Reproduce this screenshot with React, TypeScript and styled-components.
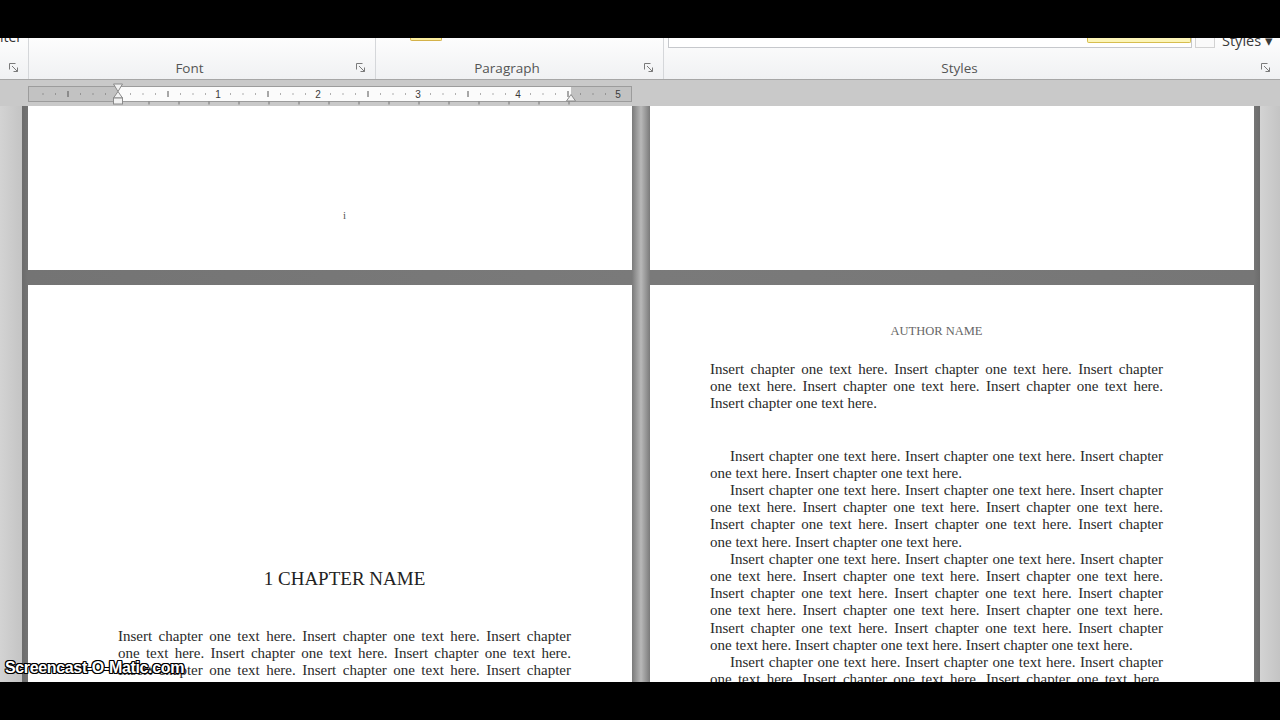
import React from "react";
import styled, { createGlobalStyle } from "styled-components";

const GlobalStyle = createGlobalStyle`
  html, body {
    margin: 0;
    padding: 0;
    background: #000;
  }
`;

const LINE_A = "Insert chapter one text here. Insert chapter one text here. Insert chapter";
const LINE_B = "one text here. Insert chapter one text here. Insert chapter one text here.";

type Para = { indent: boolean; lines: string[]; open?: boolean };

// right hand page, line breaks as in the document
const rightParas: Para[] = [
  { indent: false, lines: [LINE_A, LINE_B, "Insert chapter one text here."] },
  { indent: true, lines: [LINE_A, "one text here. Insert chapter one text here."] },
  { indent: true, lines: [LINE_A, LINE_B, LINE_A, "one text here. Insert chapter one text here."] },
  { indent: true, lines: [LINE_A, LINE_B, LINE_A, LINE_B, LINE_A, LINE_B] },
  { indent: true, lines: [LINE_A, LINE_B, LINE_A], open: true },
];

const leftPara: Para = { indent: false, lines: [LINE_A, LINE_B, LINE_A, LINE_B], open: true };

function Launcher() {
  return (
    <LauncherIcon viewBox="0 0 10 10">
      <path d="M0.5 6.5 V0.5 H6.5" />
      <path d="M3 3 L8.5 8.5" />
      <path d="M8.5 4.5 V8.5 H4.5" />
    </LauncherIcon>
  );
}

function Ruler() {
  const marks: React.ReactNode[] = [];
  for (let i = -7; i <= 41; i++) {
    const x = 90 + i * 12.5;
    if (x < 3 || x > 600) continue;
    if (i % 8 === 0 && i !== 0) {
      marks.push(
        <text key={i} x={x} y={14.5} textAnchor="middle" fontSize="10" fill="#3a3a3a" fontFamily="'Liberation Sans', Arial, sans-serif">
          {i / 8}
        </text>
      );
    } else if (i % 4 === 0 && i !== 0) {
      marks.push(<line key={i} x1={x} x2={x} y1={8} y2={14} stroke="#555" strokeWidth="1" />);
    } else if (i !== 0) {
      marks.push(<rect key={i} x={x - 0.5} y={10.5} width={1} height={1} fill="#666" />);
    }
  }
  const tabs: React.ReactNode[] = [];
  for (let x = 121; x < 543; x += 30) {
    tabs.push(<line key={x} x1={x} x2={x} y1={18.5} y2={21.5} stroke="#777" strokeWidth="1" />);
  }
  return (
    <svg width="604" height="23" viewBox="0 0 604 23">
      <rect x="0.5" y="3.5" width="603" height="15" fill="#c2c2c2" stroke="#9c9c9c" />
      <rect x="90" y="4" width="453" height="14" fill="#fbfbfb" />
      {marks}
      {tabs}
      <polygon points="85.5,1 94.5,1 90,8.5" fill="#f2f2f2" stroke="#8a8a8a" />
      <polygon points="90,8.5 85.5,15 94.5,15" fill="#f2f2f2" stroke="#8a8a8a" />
      <rect x="85.5" y="15" width="9" height="6" fill="#f2f2f2" stroke="#8a8a8a" />
      <polygon points="538.5,18 547.5,18 543,11.5" fill="#f2f2f2" stroke="#8a8a8a" />
    </svg>
  );
}

function Paragraph({ para }: { para: Para }) {
  return (
    <Para>
      {para.lines.map((line, i) => (
        <Line key={i} $indent={para.indent && i === 0} $last={!para.open && i === para.lines.length - 1}>
          {line}
        </Line>
      ))}
    </Para>
  );
}

function App() {
  return (
    <Screen>
      <GlobalStyle />
      <Letterbox />
      <Ribbon>
        <Group $width={29}>
          <TopRow $align="flex-end">
            <ClippedText>Filter</ClippedText>
          </TopRow>
          <LabelRow>
            <GroupLabel />
            <Launcher />
          </LabelRow>
        </Group>
        <Group $width={347}>
          <TopRow />
          <LabelRow>
            <GroupLabel>Font</GroupLabel>
            <Launcher />
          </LabelRow>
        </Group>
        <Group $width={288}>
          <TopRow>
            <HighlightTab />
          </TopRow>
          <LabelRow>
            <GroupLabel>Paragraph</GroupLabel>
            <Launcher />
          </LabelRow>
        </Group>
        <Group $grow>
          <TopRow>
            <Gallery>
              <GallerySelected />
            </Gallery>
            <MiniBox />
            <StylesButton>Styles ▾</StylesButton>
          </TopRow>
          <LabelRow>
            <GroupLabel>Styles</GroupLabel>
            <Launcher />
          </LabelRow>
        </Group>
      </Ribbon>
      <RulerBand>
        <Ruler />
      </RulerBand>
      <DocArea>
        <SideStrip $width={22} />
        <PageGrid>
          <Page $side="left">
            <PageNumber>i</PageNumber>
          </Page>
          <Page $side="right" />
          <Page $side="left">
            <ChapterTitle>1 CHAPTER NAME</ChapterTitle>
            <Body $top={38}>
              <Paragraph para={leftPara} />
            </Body>
          </Page>
          <Page $side="right">
            <RunningHead>AUTHOR NAME</RunningHead>
            <Body $top={22}>
              {rightParas.map((p, i) => (
                <Block key={i} $gap={i === 1 ? 35 : 0}>
                  <Paragraph para={p} />
                </Block>
              ))}
            </Body>
          </Page>
        </PageGrid>
        <SideStrip $grow />
      </DocArea>
      <Letterbox />
      <Watermark>Screencast-O-Matic.com</Watermark>
    </Screen>
  );
}

const Screen = styled.div`
  position: relative;
  width: 1280px;
  height: 720px;
  display: flex;
  flex-direction: column;
  background: #000;
  overflow: hidden;
`;

const Letterbox = styled.div`
  height: 38px;
  flex-shrink: 0;
  background: #000;
`;

const Ribbon = styled.div`
  height: 42px;
  flex-shrink: 0;
  display: flex;
  box-sizing: border-box;
  background: linear-gradient(#fdfdfd, #f0f1f3);
  border-bottom: 1px solid #a6a6a6;
  font-family: "Open Sans", "Noto Sans", sans-serif;
`;

const Group = styled.div<{ $width?: number; $grow?: boolean }>`
  box-sizing: border-box;
  width: ${(p) => (p.$width ? `${p.$width}px` : "auto")};
  flex: ${(p) => (p.$grow ? "1" : "none")};
  display: flex;
  flex-direction: column;
  border-right: ${(p) => (p.$grow ? "none" : "1px solid #d5d7da")};
`;

const TopRow = styled.div<{ $align?: string }>`
  height: 12px;
  display: flex;
  align-items: flex-start;
  justify-content: ${(p) => p.$align || "flex-start"};
  overflow: hidden;
`;

const ClippedText = styled.span`
  font-size: 14px;
  line-height: 14px;
  color: #333;
  margin-top: -8px;
  padding-right: 6px;
  white-space: nowrap;
`;

const HighlightTab = styled.div`
  margin-left: 34px;
  width: 30px;
  height: 2px;
  background: #fbeea0;
  border: 1px solid #d4b24a;
  border-top: none;
  border-radius: 0 0 2px 2px;
`;

const Gallery = styled.div`
  margin-left: 4px;
  width: 524px;
  height: 10px;
  box-sizing: border-box;
  display: flex;
  justify-content: flex-end;
  background: #fff;
  border: 1px solid #c6c8cc;
  border-top: none;
`;

const GallerySelected = styled.div`
  width: 104px;
  height: 5px;
  box-sizing: border-box;
  background: #fcf5b8;
  border: 1px solid #d6bd4e;
  border-top: none;
  border-radius: 0 0 2px 2px;
`;

const MiniBox = styled.div`
  margin-left: 3px;
  width: 20px;
  height: 10px;
  box-sizing: border-box;
  background: #fafafa;
  border: 1px solid #d2d2d2;
  border-top: none;
`;

const StylesButton = styled.span`
  margin-left: 7px;
  margin-top: -5px;
  font-size: 14.5px;
  line-height: 16px;
  color: #3a3a3a;
  white-space: nowrap;
`;

const LabelRow = styled.div`
  flex: 1;
  display: flex;
  align-items: center;
  padding-top: 7px;
  padding-right: 9px;
`;

const GroupLabel = styled.span`
  flex: 1;
  text-align: center;
  padding-right: 6px;
  font-size: 13.5px;
  color: #555;
`;

const LauncherIcon = styled.svg`
  width: 10px;
  height: 10px;
  fill: none;
  stroke: #7a7a7a;
  stroke-width: 1;
`;

const RulerBand = styled.div`
  height: 26px;
  flex-shrink: 0;
  box-sizing: border-box;
  padding: 3px 0 0 28px;
  background: #c9c9c9;
`;

const DocArea = styled.div`
  height: 576px;
  flex-shrink: 0;
  display: flex;
  overflow: hidden;
`;

const SideStrip = styled.div<{ $width?: number; $grow?: boolean }>`
  width: ${(p) => (p.$width ? `${p.$width}px` : "auto")};
  flex: ${(p) => (p.$grow ? "1" : "none")};
  background: linear-gradient(to right, #d3d3d3, #c4c4c4);
`;

const PageGrid = styled.div`
  display: grid;
  grid-template-columns: 604px 604px;
  grid-template-rows: 164px 397px;
  column-gap: 18px;
  row-gap: 15px;
  padding: 0 6px;
  background: linear-gradient(
    to right,
    #6c6c6c 0,
    #747474 6px,
    #7a7a7a 610px,
    #969696 614px,
    #b8b8b8 619px,
    #969696 624px,
    #7a7a7a 628px,
    #767676 1232px,
    #6c6c6c 1238px
  );
`;

const Page = styled.div<{ $side: "left" | "right" }>`
  background: #fff;
  overflow: hidden;
  padding: ${(p) => (p.$side === "left" ? "0 61px 0 90px" : "0 91px 0 60px")};
  font-family: "Liberation Serif", "Times New Roman", serif;
  color: #2a2a2a;
`;

const PageNumber = styled.div`
  margin-top: 102px;
  text-align: center;
  font-size: 11px;
  line-height: 14px;
  color: #555;
`;

const ChapterTitle = styled.div`
  margin-top: 283px;
  text-align: center;
  font-size: 19px;
  line-height: 22px;
  color: #222;
`;

const RunningHead = styled.div`
  margin-top: 38px;
  text-align: center;
  font-size: 12.5px;
  line-height: 16px;
  color: #666;
`;

const Body = styled.div<{ $top: number }>`
  margin-top: ${(p) => p.$top}px;
  font-size: 15px;
  line-height: 17.2px;
`;

const Block = styled.div<{ $gap: number }>`
  margin-top: ${(p) => p.$gap}px;
`;

const Para = styled.div``;

const Line = styled.div<{ $indent?: boolean; $last?: boolean }>`
  white-space: nowrap;
  padding-left: ${(p) => (p.$indent ? "20px" : "0")};
  text-align: ${(p) => (p.$last ? "left" : "justify")};
  text-align-last: ${(p) => (p.$last ? "left" : "justify")};
`;

const Watermark = styled.div`
  position: absolute;
  left: 5px;
  top: 659px;
  font-family: "Liberation Sans", Arial, sans-serif;
  font-weight: bold;
  font-size: 16px;
  line-height: 18px;
  letter-spacing: -0.35px;
  color: #fff;
  text-shadow: -1px -1px 0 #000, 1px -1px 0 #000, -1px 1px 0 #000, 1px 1px 0 #000,
    0 1px 0 #000, 0 -1px 0 #000, 1px 0 0 #000, -1px 0 0 #000;
`;

export default App;
